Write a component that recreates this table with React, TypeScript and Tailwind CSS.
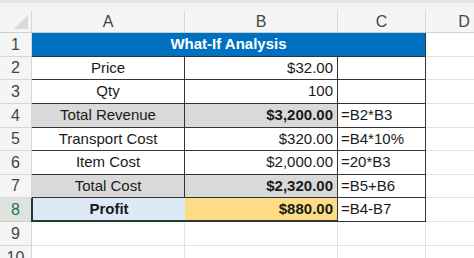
const rows = [
  { n: 2, a: "Price", b: "$32.00", c: "", shade: "" },
  { n: 3, a: "Qty", b: "100", c: "", shade: "" },
  { n: 4, a: "Total Revenue", b: "$3,200.00", c: "=B2*B3", shade: "gray" },
  { n: 5, a: "Transport Cost", b: "$320.00", c: "=B4*10%", shade: "" },
  { n: 6, a: "Item Cost", b: "$2,000.00", c: "=20*B3", shade: "" },
  { n: 7, a: "Total Cost", b: "$2,320.00", c: "=B5+B6", shade: "gray" },
];

const heights = ["h-[23px]", "h-[24px]", "h-[24px]", "h-[23px]", "h-[24px]", "h-[23px]"];

export default function App() {
  return (
    <div className="w-[474px] h-[258px] overflow-hidden bg-white text-[15px] text-[#1a1a1a] font-['Liberation_Sans',Arial,sans-serif]">
      {/* ribbon remnant */}
      <div className="h-[11px] bg-[#f3f3f3] border-t-[3px] border-[#e6e6e6]" />

      {/* column headers */}
      <div className="flex h-[22px] bg-[#f5f5f5] border-b border-[#cfcfcf] text-[#444] text-[16px]">
        <div className="w-[32px] shrink-0 border-r border-[#d6d6d6] relative">
          <div className="absolute right-[3px] bottom-[3px] w-0 h-0 border-l-[14px] border-l-transparent border-b-[14px] border-b-[#dadada]" />
        </div>
        <div className="w-[153px] shrink-0 border-r border-[#d6d6d6] flex items-center justify-center">A</div>
        <div className="w-[153px] shrink-0 border-r border-[#d6d6d6] flex items-center justify-center">B</div>
        <div className="w-[88px] shrink-0 border-r border-[#d6d6d6] flex items-center justify-center">C</div>
        <div className="flex-1 flex items-center justify-center pl-[28px]">D</div>
      </div>

      {/* row 1: title */}
      <div className="flex h-[24px]">
        <div className="w-[32px] shrink-0 bg-[#f5f5f5] border-r border-b border-[#d6d6d6] text-[#444] text-[16px] flex items-center justify-center">1</div>
        <div className="w-[394px] shrink-0 bg-[#0070c0] border-b border-r border-[#333] text-white font-bold flex items-center justify-center">
          What-If Analysis
        </div>
        <div className="flex-1 border-b border-[#e1e1e1]" />
      </div>

      {rows.map((r, i) => {
        const bg = r.shade === "gray" ? "bg-[#d9d9d9]" : "bg-white";
        const bold = r.shade === "gray" ? "font-bold" : "";
        return (
          <div key={r.n} className={`flex ${heights[i]}`}>
            <div className="w-[32px] shrink-0 bg-[#f5f5f5] border-r border-b border-[#d6d6d6] text-[#444] text-[16px] flex items-center justify-center">
              {r.n}
            </div>
            <div className={`w-[153px] shrink-0 ${bg} border-r border-b border-[#333] flex items-center justify-center`}>
              {r.a}
            </div>
            <div className={`w-[153px] shrink-0 ${bg} ${bold} border-r border-b border-[#333] flex items-center justify-end pr-[4px]`}>
              {r.b}
            </div>
            <div className="w-[88px] shrink-0 border-r border-b border-[#333] flex items-center pl-[3px]">{r.c}</div>
            <div className="flex-1 border-b border-[#e1e1e1]" />
          </div>
        );
      })}

      {/* row 8: profit, selected */}
      <div className="flex h-[24px]">
        <div className="w-[31px] shrink-0 bg-[#dfe3df] border-b border-[#c9cfc9] text-[#217346] text-[16px] flex items-center justify-center">
          8
        </div>
        <div className="w-[154px] shrink-0 bg-[#dde9f6] border-l-2 border-b-2 border-[#1f3d2c] font-bold flex items-center justify-center">
          Profit
        </div>
        <div className="w-[153px] shrink-0 bg-[#fddc87] border-r border-b-2 border-[#333] font-bold flex items-center justify-end pr-[4px]">
          $880.00
        </div>
        <div className="w-[88px] shrink-0 border-r border-b border-[#333] flex items-center pl-[3px]">=B4-B7</div>
        <div className="flex-1 border-b border-[#e1e1e1]" />
      </div>

      {[9, 10].map((n) => (
        <div key={n} className="flex h-[24px]">
          <div className="w-[32px] shrink-0 bg-[#f5f5f5] border-r border-b border-[#d6d6d6] text-[#444] text-[16px] flex items-center justify-center">
            {n}
          </div>
          <div className="w-[153px] shrink-0 border-r border-b border-[#e1e1e1]" />
          <div className="w-[153px] shrink-0 border-r border-b border-[#e1e1e1]" />
          <div className="w-[88px] shrink-0 border-r border-b border-[#e1e1e1]" />
          <div className="flex-1 border-b border-[#e1e1e1]" />
        </div>
      ))}
    </div>
  );
}
